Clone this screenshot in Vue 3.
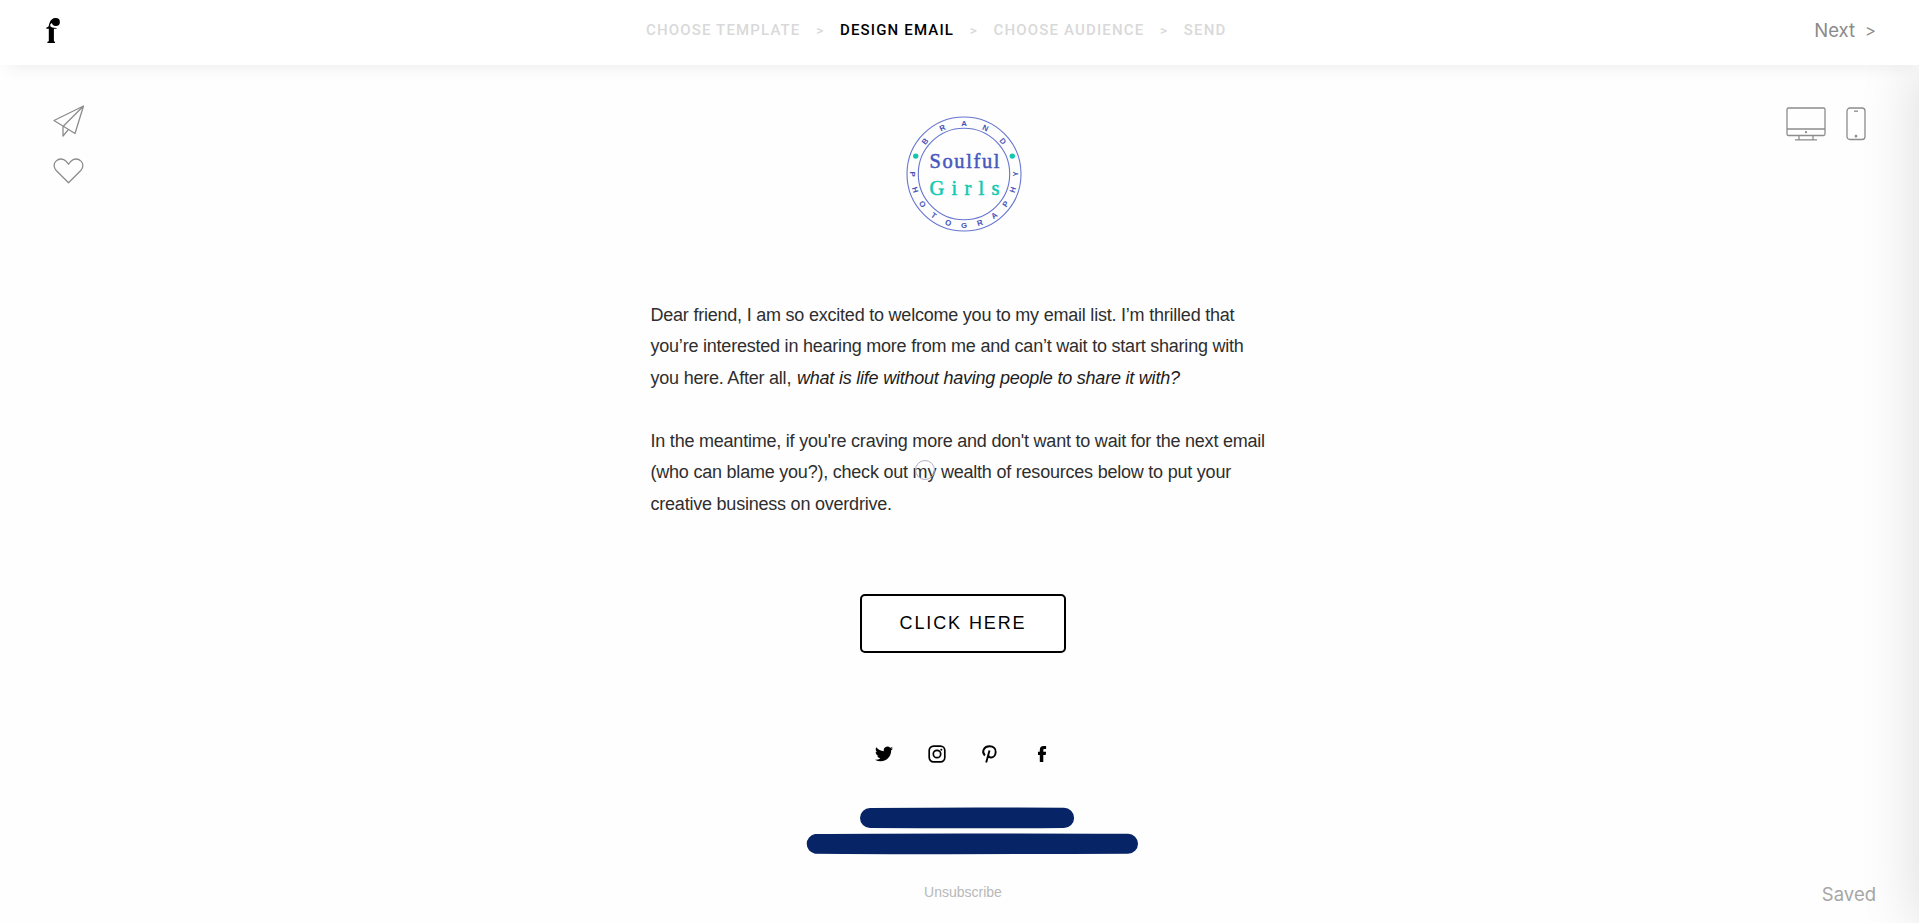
<script setup>
const topLetters = 'BRAND'.split('').map((c, i) => ({ c, a: (i - 2) * 25 }))
const bottomLetters = 'PHOTOGRAPHY'.split('').map((c, i) => ({ c, a: 90 - i * 18 }))
const steps = ['CHOOSE TEMPLATE', 'DESIGN EMAIL', 'CHOOSE AUDIENCE', 'SEND']
</script>

<template>
  <div class="page">
    <header class="bar">
      <svg class="mark" width="16" height="28" viewBox="0 0 16 28">
        <circle cx="9.900" cy="5" r="4" />
        <path d="M9.500 1C5.600 1.400 3.600 4 2.600 9.600L.3 10.800v1h10.300V11l-2.700-.2c-2.200-.2-3.800-1-3.700-2.600C4.300 6.800 5.200 6.300 6.500 6Z" />
        <path d="M2.800 11h5.100v13.300l1.100.5v1.200H1.400v-1.200l1.400-.5Z" />
      </svg>
      <nav class="steps">
        <template v-for="(s, i) in steps" :key="s">
          <span v-if="i" class="sep">&gt;</span>
          <span class="step" :class="{ active: i === 1 }">{{ s }}</span>
        </template>
      </nav>
      <div class="next"><span>Next</span><span class="arrow">&gt;</span></div>
    </header>

    <main class="body">
      <aside class="left">
        <svg width="32" height="32" viewBox="0 0 32 32" class="line">
          <path d="M30.500 1 1 15.500 22 28.500ZM30.500 1 10 21.500V31L15.300 24.600" />
        </svg>
        <svg width="32" height="26" viewBox="0 0 32 26" class="line">
          <path d="M15.500 24.700 3.200 12.500C.4 9.500.5 5.500 3 3.100c3-2.900 7.400-2.700 10 .1l2.500 3 2.500-3c2.600-2.800 7-3 10-.1 2.500 2.400 2.600 6.400-.2 9.400Z" />
        </svg>
      </aside>

      <article class="email">
        <svg class="logo" width="120" height="120" viewBox="-60 -60 120 120">
          <g fill="none" stroke="#6675cf" stroke-width="1.100">
            <circle r="57" />
            <circle r="45.700" />
          </g>
          <g fill="#13c6ae"><circle cx="-48.300" cy="-17.900" r="2.700" /><circle cx="48.300" cy="-17.900" r="2.700" /></g>
          <g class="ring">
            <text v-for="(l, i) in topLetters" :key="'t' + i" :transform="`rotate(${l.a})`" x="0" y="-48.200">{{ l.c }}</text>
            <text v-for="(l, i) in bottomLetters" :key="'b' + i" :transform="`rotate(${l.a})`" x="0" y="54">{{ l.c }}</text>
          </g>
          <text class="brand" x="-34.500" y="-6.500" textLength="70">Soulful</text>
          <text class="brand teal" x="-34.500" y="21" textLength="70">Girls</text>
        </svg>

        <div class="copy">
          <p>Dear friend, I am so excited to welcome you to my email list. I’m thrilled that<br />you’re interested in hearing more from me and can’t wait to start sharing with<br />you here. After all, <em>what is life without having people to share it with?</em></p>
          <p>In the meantime, if you're craving more and don't want to wait for the next email<br />(who can blame you?), check out <span class="hot">my<i class="cursor"></i></span> wealth of resources below to put your<br />creative business on overdrive.</p>
        </div>

        <button class="cta">CLICK HERE</button>

        <div class="social">
          <svg width="18" height="18" viewBox="0 0 24 24"><path d="M23.950 4.570a10 10 0 0 1-2.820.77 4.960 4.960 0 0 0 2.160-2.720c-.95.55-2 .95-3.130 1.180a4.920 4.920 0 0 0-8.380 4.480C7.690 8.090 4.070 6.130 1.640 3.160a4.820 4.820 0 0 0-.67 2.470c0 1.710.87 3.210 2.190 4.100a4.900 4.900 0 0 1-2.230-.62v.06a4.920 4.920 0 0 0 3.950 4.830 5 5 0 0 1-2.210.08 4.940 4.940 0 0 0 4.600 3.420A9.870 9.870 0 0 1 0 19.540a13.990 13.990 0 0 0 7.550 2.210c9.050 0 14-7.500 14-13.980l-.02-.63a9.940 9.940 0 0 0 2.420-2.570Z" /></svg>
          <svg width="18" height="18" viewBox="0 0 18 18"><g fill="none" stroke="#000" stroke-width="1.700"><rect x="1.200" y="1.200" width="15.600" height="15.600" rx="4.300" /><circle cx="9" cy="9" r="3.700" /></g><circle cx="13.300" cy="4.700" r="1" /></svg>
          <svg width="18" height="18" viewBox="0 0 18 18"><path d="M3.900 10.500C.3 7 2.700 1.500 8.300 1.300c4.200-.1 6.700 2.500 6.400 5.800-.3 3.400-2.400 5.600-4.900 5.400-1.400-.1-2.300-1-2.500-2M8.500 5.500 5.200 17.500" fill="none" stroke="#000" stroke-width="1.900" /></svg>
          <svg width="18" height="18" viewBox="0 0 18 18"><path d="M5.800 17V9.900H4V6.800h1.800V4.900C5.800 2.400 7 1 9.600 1h2.500v3h-1.500c-1 0-1.300.4-1.300 1.200v1.600h2.800l-.4 3.100H9.300V17Z" /></svg>
        </div>

        <div class="redacted">
          <svg width="334" height="50" viewBox="0 0 334 50">
            <path d="M66 3Q165 2 260 2.800A10 10 0 0 1 260 23Q165 23.700 66 23A10 10 0 0 1 66 3Z" />
            <path d="M11 29Q90 28 324 28.700A10 10 0 0 1 324 48.700Q120 49.600 11 48.700A10 10 0 0 1 11 29Z" />
          </svg>
        </div>
        <a class="unsub">Unsubscribe</a>
      </article>

      <aside class="devices">
        <svg width="40" height="34" viewBox="0 0 40 34" class="line">
          <rect x="1" y="1" width="38" height="27.500" rx="1.500" /><path d="M1 22H39M13 28.500V32.500M27 28.500V32.500M9 32.800H31" /><circle cx="20" cy="25.200" r=".5" />
        </svg>
        <svg width="20" height="34" viewBox="0 0 20 34" class="line">
          <rect x="1" y="1" width="18" height="31.500" rx="3" /><path d="M8 4.200h4" /><circle cx="10" cy="29.200" r=".7" />
        </svg>
      </aside>
      <div class="saved">Saved</div>
      <div class="edge"></div>
    </main>
  </div>
</template>

<style scoped>
.page { width: 1919px; height: 923px; display: flex; flex-direction: column; overflow: hidden; background: #fefefe; font-family: Inter, "Liberation Sans", sans-serif; font-optical-sizing: none; }
.bar { height: 65px; flex: none; position: relative; z-index: 2; background: #fff; display: flex; align-items: flex-start; justify-content: space-between; box-sizing: border-box; padding: 0 43px 0 46px; box-shadow: 0 12px 14px -8px rgba(0, 0, 0, .06); }
.mark { margin-top: 17px; }
.steps { position: absolute; left: 646px; top: 20px; display: flex; align-items: center; height: 20px; gap: 15.700px; font: 500 15px/20px Roboto, sans-serif; letter-spacing: 1.150px; color: #d9d9d9; white-space: nowrap; }
.sep { font-size: 13.500px; }
.active { color: #000; }
.next { display: flex; gap: 10px; margin-top: 18px; font-size: 18.500px; line-height: 24px; color: #8a8a8a; }
.arrow { font-size: 16.500px; }
.body { flex: 1; position: relative; display: flex; justify-content: space-between; }
.line { fill: none; stroke: #8c8c8c; stroke-width: 1.300; stroke-linejoin: round; }
.left { width: 640px; box-sizing: border-box; padding: 39.500px 0 0 52.500px; display: flex; flex-direction: column; gap: 21px; }
.email { width: 626px; display: flex; flex-direction: column; align-items: center; margin-right: auto; margin-left: 10px; font-family: "Liberation Sans", sans-serif; }
.logo { margin: 49px 0 0 1px; }
.ring { font: 700 7.800px "Liberation Sans", sans-serif; fill: #4354b8; text-anchor: middle; }
.brand { font: 400 20.500px "Liberation Serif", serif; fill: #4858bd; stroke: #4858bd; stroke-width: .5px; }
.teal { fill: #12c9b1; stroke: #12c9b1; }
.copy { align-self: stretch; margin-top: 65.500px; padding-left: .5px; font-size: 18px; letter-spacing: -.22px; line-height: 31.500px; color: #2e2e2e; white-space: nowrap; }
.copy p { margin: 0 0 31.500px; }
.copy em { color: #1c1c1c; margin-left: 1px; }
.hot { position: relative; }
.cursor { position: absolute; left: 2px; top: -2px; width: 18px; height: 18px; border: 1px solid #b3b1c4; border-radius: 50%; }
.cta { margin-top: 42px; width: 206px; height: 59px; border: 2px solid #000; border-radius: 5px; background: #fff; color: #000; font: 18px "Liberation Sans", sans-serif; letter-spacing: 1.900px; padding: 0; }
.social { display: flex; gap: 35px; margin-top: 92px; }
.redacted { margin: 42px 0 0 15px; height: 50px; }
.redacted svg { display: block; fill: #072466; }
.unsub { margin-top: 27px; font-size: 14px; line-height: 20px; color: #b8b8b8; }
.devices { display: flex; gap: 20px; padding: 41.500px 53px 0 0; }
.saved { position: absolute; right: 43px; bottom: 17px; font-size: 18.500px; line-height: 24px; color: #a6a6a6; }
.edge { position: absolute; left: 1919px; top: 0; width: 60px; height: 858px; box-shadow: 0 0 60px rgba(0, 0, 0, .15); }
</style>
